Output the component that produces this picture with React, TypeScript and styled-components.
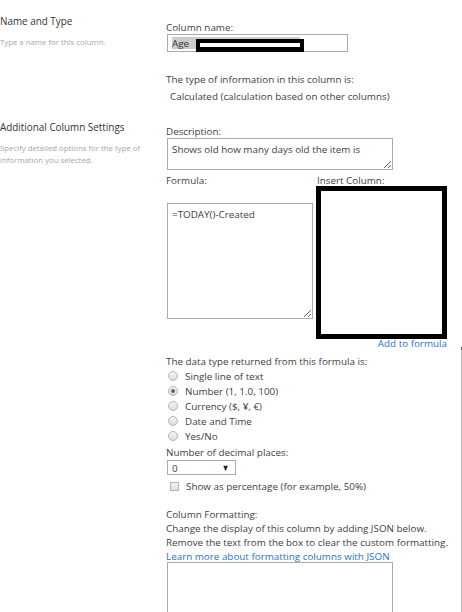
import * as React from 'react'
import styled, { createGlobalStyle } from 'styled-components'

const GlobalStyle = createGlobalStyle`
	html, body {
		margin: 0;
		padding: 0;
		background: #ffffff;
	}
	body {
		font-family: 'Open Sans', 'Noto Sans', sans-serif;
		color: #444444;
		overflow: hidden;
	}
`

const radioOptions = [
	{ label: 'Single line of text', checked: false },
	{ label: 'Number (1, 1.0, 100)', checked: true },
	{ label: 'Currency ($, ¥, €)', checked: false },
	{ label: 'Date and Time', checked: false },
	{ label: 'Yes/No', checked: false },
]

export default function App() {
	return (
		<Page>
			<GlobalStyle />
			<Section>
				<SideInfo>
					<SideTitle>Name and Type</SideTitle>
					<SideHint>Type a name for this column.</SideHint>
				</SideInfo>
				<Fields>
					<Label $top={20}>Column name:</Label>
					<FakeInput>
						<Selected>Age</Selected>
						<Redact $width={108} $height={13} $left={28} $top={4} />
					</FakeInput>
					<Label $top={20}>The type of information in this column is:</Label>
					<Value>Calculated (calculation based on other columns)</Value>
				</Fields>
			</Section>

			<Section>
				<SideInfo>
					<SideTitle $top={17}>Additional Column Settings</SideTitle>
					<SideHint>
						Specify detailed options for the type of
						<br />
						information you selected.
					</SideHint>
				</SideInfo>
				<Fields>
					<Label $top={21}>Description:</Label>
					<TextBox $width={226} $height={32} defaultValue="Shows old how many days old the item is" />

					<FormulaRow>
						<FormulaCol>
							<Label $top={3}>Formula:</Label>
							<TextBox $width={146} $height={116} $top={16} defaultValue="=TODAY()-Created" />
						</FormulaCol>
						<InsertCol>
							<Label $top={3}>Insert Column:</Label>
							<ColumnList />
							<LinkText>Add to formula</LinkText>
						</InsertCol>
					</FormulaRow>

					<Label $top={4}>The data type returned from this formula is:</Label>
					<RadioList>
						{radioOptions.map((opt) => (
							<RadioRow key={opt.label}>
								<Radio $checked={opt.checked} />
								<span>{opt.label}</span>
							</RadioRow>
						))}
					</RadioList>

					<Label $top={2}>Number of decimal places:</Label>
					<Select>
						<span>0</span>
						<Arrow>▼</Arrow>
					</Select>
					<CheckRow>
						<Checkbox />
						<span>Show as percentage (for example, 50%)</span>
					</CheckRow>

					<Label $top={13}>Column Formatting:</Label>
					<Label>Change the display of this column by adding JSON below.</Label>
					<Label>Remove the text from the box to clear the custom formatting.</Label>
					<LinkText $left>Learn more about formatting columns with JSON</LinkText>
					<TextBox $width={226} $height={80} $top={-1} $indent={1} />
				</Fields>
			</Section>
			<ScrollEdge />
		</Page>
	)
}

const Page = styled.div`
	position: relative;
	width: 462px;
	height: 612px;
	overflow: hidden;
`

const Section = styled.div`
	display: grid;
	grid-template-columns: 166px 1fr;
	align-items: start;
`

const SideInfo = styled.div`
	display: flex;
	flex-direction: column;
`

const SideTitle = styled.div<{ $top?: number }>`
	margin-top: ${(p) => p.$top ?? 14}px;
	font-size: 9.9px;
	line-height: 14px;
	color: #333333;
`

const SideHint = styled.div`
	margin-top: 8px;
	font-size: 7.8px;
	line-height: 12px;
	color: #a6a6a6;
`

const Fields = styled.div`
	display: flex;
	flex-direction: column;
	align-items: flex-start;
	font-size: 9.85px;
`

const Label = styled.div<{ $top?: number }>`
	margin-top: ${(p) => p.$top ?? 0}px;
	line-height: 14px;
	height: 14px;
	color: #404040;
	white-space: nowrap;
`

const Value = styled.div`
	margin-top: 3px;
	padding-left: 4px;
	line-height: 14px;
	color: #404040;
`

const FakeInput = styled.div`
	position: relative;
	box-sizing: border-box;
	width: 181px;
	height: 18px;
	margin-left: 1px;
	border: 1px solid #ababab;
	padding: 2px 4px;
	line-height: 12px;
`

const Selected = styled.span`
	display: inline-block;
	width: 128px;
	background: #cccccc;
	color: #333333;
`

const Redact = styled.div<{ $width: number; $height: number; $left: number; $top: number }>`
	position: absolute;
	left: ${(p) => p.$left}px;
	top: ${(p) => p.$top}px;
	box-sizing: border-box;
	width: ${(p) => p.$width}px;
	height: ${(p) => p.$height}px;
	border: 4px solid #000000;
	border-bottom-width: 5px;
	background: #ffffff;
`

const TextBox = styled.textarea<{ $width: number; $height: number; $top?: number; $indent?: number }>`
	box-sizing: border-box;
	display: block;
	width: ${(p) => p.$width}px;
	height: ${(p) => p.$height}px;
	margin: ${(p) => p.$top ?? 0}px 0 0 ${(p) => p.$indent ?? 1}px;
	padding: 3px 4px;
	border: 1px solid #ababab;
	border-radius: 0;
	font-family: 'Open Sans', 'Noto Sans', sans-serif;
	font-size: 9.85px;
	line-height: 14px;
	color: #404040;
	outline: none;
	overflow: hidden;
	resize: both;
`

const FormulaRow = styled.div`
	display: flex;
	gap: 2px;
`

const FormulaCol = styled.div`
	display: flex;
	flex-direction: column;
	width: 148px;
`

const InsertCol = styled.div`
	display: flex;
	flex-direction: column;
	align-items: flex-end;
	width: 131px;

	& > div:first-child {
		align-self: flex-start;
		padding-left: 1px;
	}
`

const ColumnList = styled.div`
	box-sizing: border-box;
	width: 131px;
	height: 153px;
	margin-top: -1px;
	border: 5px solid #000000;
	background: #ffffff;
`

const LinkText = styled.div<{ $left?: boolean }>`
	line-height: 14px;
	height: 14px;
	margin-top: ${(p) => (p.$left ? 0 : -3)}px;
	color: #1f74c9;
	white-space: nowrap;
`

const RadioList = styled.div`
	display: flex;
	flex-direction: column;
	margin-top: 0;
	padding-left: 2px;
`

const RadioRow = styled.div`
	display: flex;
	align-items: center;
	gap: 7px;
	height: 15px;
	color: #404040;
`

const Radio = styled.span<{ $checked: boolean }>`
	box-sizing: border-box;
	position: relative;
	width: 10px;
	height: 10px;
	border-radius: 50%;
	border: 1px solid #b4b4b4;
	background: linear-gradient(#f4f4f4, #dcdcdc);

	&::after {
		content: '';
		display: ${(p) => (p.$checked ? 'block' : 'none')};
		position: absolute;
		left: 2px;
		top: 2px;
		width: 4px;
		height: 4px;
		border-radius: 50%;
		background: #666666;
	}
`

const Select = styled.div`
	box-sizing: border-box;
	display: flex;
	align-items: center;
	justify-content: space-between;
	width: 69px;
	height: 15px;
	margin: 1px 0 0 1px;
	padding: 0 5px 0 4px;
	border: 1px solid #ababab;
	line-height: 12px;
	color: #404040;
`

const Arrow = styled.span`
	font-size: 9px;
	color: #222222;
	transform: scaleX(0.85);
`

const CheckRow = styled.div`
	display: flex;
	align-items: center;
	gap: 7px;
	height: 16px;
	margin-top: 3px;
	padding-left: 4px;
	color: #404040;
`

const Checkbox = styled.span`
	box-sizing: border-box;
	width: 9px;
	height: 9px;
	border: 1px solid #b4b4b4;
	background: linear-gradient(#f4f4f4, #dedede);
`

const ScrollEdge = styled.div`
	position: absolute;
	right: 0;
	top: 347px;
	bottom: 0;
	width: 1px;
	background: #b9bcc1;
	border-top: 3px solid #555555;
`
